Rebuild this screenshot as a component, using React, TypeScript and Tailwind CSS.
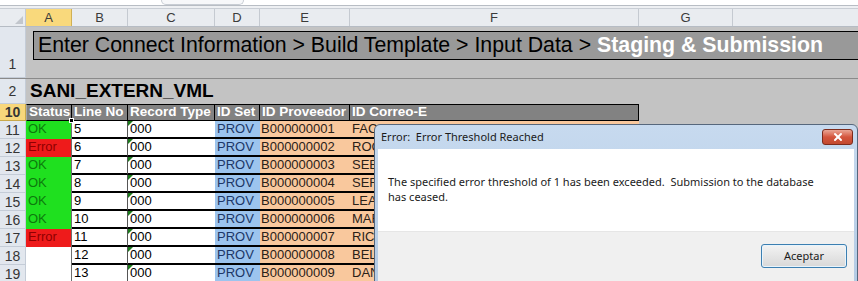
import { X } from 'lucide-react';

const colW = ['w-[46px]', 'w-[56px]', 'w-[87px]', 'w-[45px]', 'w-[90px]', 'w-[289px]', 'w-[94px]'];
const letters = ['A', 'B', 'C', 'D', 'E', 'F', 'G'];

// only the start of each e-mail cell shows, the dialog hides the rest
const rows = [
  { n: 11, status: 'OK', line: '5', id: 'B000000001', mail: 'FAC' },
  { n: 12, status: 'Error', line: '6', id: 'B000000002', mail: 'ROC' },
  { n: 13, status: 'OK', line: '7', id: 'B000000003', mail: 'SEB' },
  { n: 14, status: 'OK', line: '8', id: 'B000000004', mail: 'SER' },
  { n: 15, status: 'OK', line: '9', id: 'B000000005', mail: 'LEA' },
  { n: 16, status: 'OK', line: '10', id: 'B000000006', mail: 'MAR' },
  { n: 17, status: 'Error', line: '11', id: 'B000000007', mail: 'RIC' },
  { n: 18, status: '', line: '12', id: 'B000000008', mail: 'BEL' },
  { n: 19, status: '', line: '13', id: 'B000000009', mail: 'DAN' },
];

function RowHead({ n, active, className }: { n: number; active?: boolean; className: string }) {
  return (
    <div
      className={`w-[26px] flex-shrink-0 flex justify-center border-r border-b text-[14px] text-[#353535] ${
        active ? 'bg-[#f8d77b] border-[#c9a94a]' : 'bg-[#e2e7ee] border-[#c4ccd7]'
      } ${className}`}
    >
      {n}
    </div>
  );
}

function StatusCell({ status }: { status: string }) {
  if (status === 'OK') {
    return <div className="w-[46px] bg-[#1fe01f] text-[#0d7a0d] pl-[2px] border-r border-[#6f6f6f]">OK</div>;
  }
  if (status === 'Error') {
    return <div className="w-[46px] bg-[#ee1b1b] text-[#8e0000] pl-[2px] border-r border-[#6f6f6f]">Error</div>;
  }
  return <div className="w-[46px] bg-white border-r border-[#6f6f6f]" />;
}

export default function App() {
  return (
    <div className="relative w-[858px] h-[281px] overflow-hidden bg-[#c3c3c3] font-['Liberation_Sans',Arial,sans-serif]">
      {/* formula bar edge */}
      <div className="h-[6px] bg-white border-b border-[#b8bdc4] flex">
        <div className="ml-[161px] w-[83px] h-[5px] rounded-b-[5px] border border-t-0 border-[#c8cdd4] bg-[#f7f8fa]" />
      </div>
      <div className="h-[3px] bg-[#eef0f3] border-b border-[#c9ced5]" />

      {/* column letters */}
      <div className="flex h-[18px] bg-[#e9ecf0] border-b border-[#b6bcc4] text-[13px] text-[#3b3b3b]">
        <div className="w-[26px] flex-shrink-0 border-r border-[#c5cad1] flex items-end justify-end p-[2px]">
          <div className="w-0 h-0 border-l-[8px] border-l-transparent border-b-[8px] border-b-[#c2c6cc]" />
        </div>
        {letters.map((l, i) => (
          <div
            key={l}
            className={`${colW[i]} flex-shrink-0 flex items-center justify-center border-r ${
              i === 0 ? 'bg-[#f9d97c] border-[#d0b055]' : 'border-[#c5cad1]'
            }`}
          >
            {l}
          </div>
        ))}
        <div className="flex-1" />
      </div>

      {/* row 1 */}
      <div className="flex h-[52px] border-b border-[#8a8a8a]">
        <RowHead n={1} className="items-end pb-[2px]" />
        <div className="flex-1 overflow-hidden">
          <div className="mt-[4px] ml-[7px] w-[840px] h-[29px] bg-[#999999] border border-black flex items-center pl-[4px] text-[21.3px] whitespace-pre">
            <span className="text-black">Enter Connect Information &gt; Build Template &gt; Input Data &gt; </span>
            <span className="text-white font-bold">Staging &amp; Submission</span>
          </div>
        </div>
      </div>

      {/* row 2 */}
      <div className="flex h-[25px]">
        <RowHead n={2} className="items-center" />
        <div className="flex-1 flex items-center pl-[4px] text-[19px] font-bold text-black">SANI_EXTERN_VML</div>
      </div>

      {/* row 10 */}
      <div className="relative flex h-[17px] text-[13.5px] font-bold text-white">
        <RowHead n={10} active className="items-center" />
        <div className="w-[46px] bg-[#828282] border border-l-[#a8a8a8] border-black pl-[2px] flex items-center">Status</div>
        <div className="w-[56px] bg-[#828282] border-y border-r border-black pl-[2px] flex items-center">Line No</div>
        <div className="w-[87px] bg-[#828282] border-y border-r border-black pl-[2px] flex items-center">Record Type</div>
        <div className="w-[45px] bg-[#828282] border-y border-r border-black pl-[2px] flex items-center">ID Set</div>
        <div className="w-[90px] bg-[#828282] border-y border-r border-black pl-[2px] flex items-center">ID Proveedor</div>
        <div className="w-[289px] bg-[#828282] border-y border-r border-black pl-[2px] flex items-center">ID Correo-E</div>
        <div className="flex-1" />
        <div className="absolute left-[69px] top-[14px] w-[5px] h-[5px] bg-black border border-white" />
      </div>

      {/* data rows */}
      {rows.map((r) => (
        <div key={r.n} className="flex h-[18px] text-[13px] leading-[16px]">
          <RowHead n={r.n} className="items-center" />
          <StatusCell status={r.status} />
          <div className="w-[56px] bg-white text-black pl-[2px] border-r border-[#555] border-b-2 border-b-black">{r.line}</div>
          <div className="relative w-[87px] bg-white text-black pl-[2px] border-b-2 border-black">
            <div className="absolute left-0 top-0 w-0 h-0 border-t-[5px] border-t-[#1c7a1c] border-r-[5px] border-r-transparent" />
            000
          </div>
          <div className="w-[45px] bg-[#9cc4ee] text-[#1c3767] pl-[2px] border-b-2 border-black">PROV</div>
          <div className="w-[90px] bg-[#f9c89d] text-[#2a2118] pl-[1px] border-b-2 border-black">{r.id}</div>
          <div className="w-[289px] bg-[#f9c89d] text-[#2a2118] pl-[2px] border-b-2 border-black">{r.mail}</div>
          <div className="flex-1" />
        </div>
      ))}

      {/* dialog */}
      <div className="absolute left-[374px] top-[124px] w-[484px] h-[170px] rounded-t-[6px] border border-[#56677c] bg-gradient-to-b from-[#c7daef] to-[#b3cae4] px-[3px] flex flex-col font-['Noto_Sans',sans-serif]">
        <div className="h-[24px] flex-shrink-0 flex items-center justify-between pl-[3px]">
          <span className="text-[11px] text-[#1b1b1b] whitespace-pre">Error:  Error Threshold Reached</span>
          <div className="w-[31px] h-[16px] mr-[1px] rounded-[3px] border border-[#7c2b1c] bg-gradient-to-b from-[#e9a595] via-[#d4553d] to-[#c2492f] flex items-center justify-center">
            <X className="w-[12px] h-[12px] text-white" strokeWidth={4} />
          </div>
        </div>
        <div className="h-[82px] flex-shrink-0 bg-white pl-[10px] pt-[25px] text-[11px] leading-[15px] text-[#1b1b1b] whitespace-nowrap">
          <div className="whitespace-pre">The specified error threshold of 1 has been exceeded.  Submission to the database</div>
          <div>has ceased.</div>
        </div>
        <div className="flex-1 bg-[#f0f0f0] border-t border-[#e6e6e6] flex justify-end pr-[7px] pt-[12px]">
          <div className="w-[86px] h-[24px] rounded-[3px] border border-[#3c7fb1] bg-gradient-to-b from-[#f3f3f3] to-[#d8d8d8] shadow-[inset_0_0_0_1px_#e8f4fc] flex items-center justify-center text-[11px] text-[#1b1b1b]">
            Aceptar
          </div>
        </div>
      </div>
    </div>
  );
}
